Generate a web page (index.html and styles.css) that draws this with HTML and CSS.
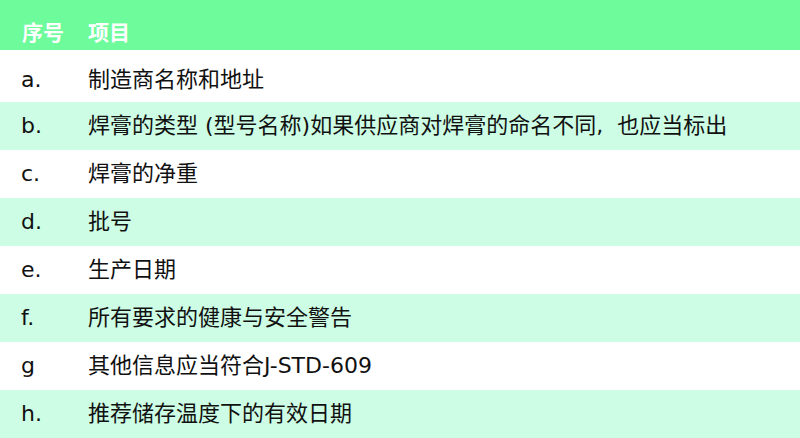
FILE: index.html
```html
<!DOCTYPE html>
<html lang="zh">
<head>
<meta charset="utf-8">
<link rel="stylesheet" href="styles.css">
</head>
<body>
<div class="table">
  <div class="row head"><div class="c1">序号</div><div class="c2">项目</div></div>
  <div class="row first"><div class="c1">a.</div><div class="c2">制造商名称和地址</div></div>
  <div class="row alt"><div class="c1">b.</div><div class="c2">焊膏的类型 (型号名称)如果供应商对焊膏的命名不同,<span class="gap"> </span>也应当标出</div></div>
  <div class="row"><div class="c1">c.</div><div class="c2">焊膏的净重</div></div>
  <div class="row alt"><div class="c1">d.</div><div class="c2">批号</div></div>
  <div class="row"><div class="c1">e.</div><div class="c2">生产日期</div></div>
  <div class="row alt"><div class="c1">f.</div><div class="c2">所有要求的健康与安全警告</div></div>
  <div class="row"><div class="c1">g</div><div class="c2">其他信息应当符合J-STD-609</div></div>
  <div class="row alt"><div class="c1">h.</div><div class="c2">推荐储存温度下的有效日期</div></div>
</div>
</body>
</html>
```
FILE: styles.css
```css
* { box-sizing: border-box; }
html, body { margin: 0; padding: 0; background: #ffffff; }
body {
  width: 800px;
  height: 438px;
  overflow: hidden;
  font-family: "DejaVu Sans", "Noto Sans CJK SC", sans-serif;
  color: #111111;
}
.table { display: flex; flex-direction: column; }
.row {
  display: grid;
  grid-template-columns: 88px 1fr;
  align-items: center;
  height: 48px;
  font-size: 22px;
  line-height: 1;
  background: #ffffff;
}
.row.alt { background: #cdfde4; }
.row.first { height: 52px; padding-top: 8px; }
.row.head {
  height: 50px;
  background: #6dfb9c;
  color: #ffffff;
  font-weight: bold;
  font-size: 21px;
  padding-top: 16px;
}
.c1 { padding-left: 21px; }
.head .c1 { padding-left: 22px; }
.c2 { white-space: nowrap; }
.gap { display: inline-block; width: 14px; }
```
